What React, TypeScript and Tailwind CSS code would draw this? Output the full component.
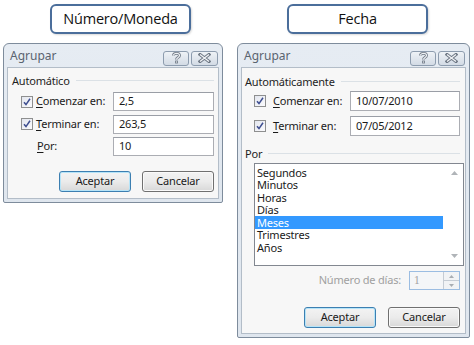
import React from "react";

const UI = "font-['Noto_Sans','Open_Sans',sans-serif]";
const T = "text-[11px] tracking-[-0.2px]";

function TitleBtn({ kind }: { kind: "help" | "close" }) {
  return (
    <div
      className={`${kind === "help" ? "w-[26px]" : "w-[27px]"} h-[15px] rounded-[3px] border border-[#8d9cae] bg-gradient-to-b from-[#eef2f6] to-[#d3dbe5] flex items-center justify-center`}
    >
      {kind === "help" ? (
        <svg width="9" height="12" viewBox="0 0 9 12">
          <path d="M1.5 3.4 C1.5 0.8 7.5 0.8 7.5 3.4 C7.5 5.4 4.5 5.4 4.5 7.6" stroke="#6d7784" strokeWidth="2.8" fill="none" />
          <path d="M1.5 3.4 C1.5 0.8 7.5 0.8 7.5 3.4 C7.5 5.4 4.5 5.4 4.5 7.6" stroke="#eef1f4" strokeWidth="1.2" fill="none" />
          <rect x="3.1" y="8.6" width="2.8" height="2.8" fill="#6d7784" />
          <rect x="3.9" y="9.4" width="1.2" height="1.2" fill="#eef1f4" />
        </svg>
      ) : (
        <svg width="13" height="10" viewBox="0 0 13 10">
          <path d="M2 1.5 L11 8.5 M11 1.5 L2 8.5" stroke="#6d7784" strokeWidth="3.2" strokeLinecap="square" />
          <path d="M2 1.5 L11 8.5 M11 1.5 L2 8.5" stroke="#f1f3f6" strokeWidth="1.3" />
        </svg>
      )}
    </div>
  );
}

function Dialog({ w, h, children }: { w: string; h: string; children: React.ReactNode }) {
  return (
    <div className={`${w} ${h} rounded-t-[6px] rounded-b-[2px] border border-[#7e8c9c] bg-gradient-to-b from-[#e6ecf3] to-[#dfe6ee] flex flex-col`}>
      <div className="h-[23px] flex items-center pl-[6px] pr-[4px] shrink-0">
        <span className="text-[12px] text-[#5a6470] leading-none">Agrupar</span>
        <div className="ml-auto flex gap-[2px] mt-[5px]">
          <TitleBtn kind="help" />
          <TitleBtn kind="close" />
        </div>
      </div>
      <div className="flex-1 mx-[3px] mb-[3px] border border-[#b3bdc8] bg-[#f7f7f7] flex flex-col">{children}</div>
    </div>
  );
}

function Section({ text }: { text: string }) {
  return (
    <div className="h-[14px] flex items-center gap-[6px]">
      <span className={`${T} text-[#1e1e1e] leading-none`}>{text}</span>
      <div className="flex-1 h-px bg-[#dbe1e6]" />
    </div>
  );
}

function Check() {
  return (
    <span className="w-[12px] h-[12px] shrink-0 border border-[#8e8f8f] bg-gradient-to-br from-[#e3e6ee] to-[#fbfbfd] flex items-center justify-center">
      <svg width="8" height="8" viewBox="0 0 8 8">
        <path d="M1 4.2 L3 6.6 L7 0.8" stroke="#3d4d8f" strokeWidth="1.5" fill="none" />
      </svg>
    </span>
  );
}

function TextBox({ value, w, h }: { value: string; w: string; h: string }) {
  return (
    <div className={`${w} ${h} ml-auto border border-[#abadb3] border-t-[#9a9ea6] bg-white flex items-center pl-[5px] ${T} text-[#1a1a1a]`}>
      {value}
    </div>
  );
}

function Btn({ label, primary, w }: { label: string; primary?: boolean; w: string }) {
  return (
    <div
      className={`${w} h-[21px] rounded-[3px] border ${
        primary ? "border-[#3c7fb1] shadow-[inset_0_0_0_1px_#b6e4f8]" : "border-[#707070] shadow-[inset_0_0_0_1px_#fafafa]"
      } bg-gradient-to-b from-[#f3f3f3] via-[#ebebeb] to-[#d8d8d8] flex items-center justify-center ${T} text-[#1a1a1a]`}
    >
      {label}
    </div>
  );
}

function LabelBox({ text }: { text: string }) {
  return (
    <div className="w-[141px] h-[30px] rounded-[6px] border-2 border-[#4b6e9b] bg-white flex items-center justify-center shadow-[1px_1px_2px_rgba(0,0,0,0.15)]">
      <span className="font-['Open_Sans',sans-serif] text-[14.5px] tracking-[-0.2px] text-[#111]">{text}</span>
    </div>
  );
}

const items = ["Segundos", "Minutos", "Horas", "Días", "Meses", "Trimestres", "Años"];

export default function App() {
  return (
    <div className={`w-[474px] h-[345px] bg-white flex pt-[4px] ${UI}`}>
      {/* Left column */}
      <div className="ml-[3px] w-[220px] flex flex-col">
        <div className="ml-[47px]">
          <LabelBox text="Número/Moneda" />
        </div>
        <div className="mt-[9px]">
          <Dialog w="w-[220px]" h="h-[160px]">
            <div className="pt-[5px] px-[4px] flex flex-col">
              <Section text="Automático" />
              <div className="mt-[5px] flex flex-col gap-[3.5px]">
                <div className="h-[19px] flex items-center">
                  <span className="ml-[9px]"><Check /></span>
                  <span className={`ml-[3px] ${T} text-[#1a1a1a]`}><u className="underline-offset-2">C</u>omenzar en:</span>
                  <TextBox value="2,5" w="w-[101px]" h="h-[19px]" />
                </div>
                <div className="h-[19px] flex items-center">
                  <span className="ml-[9px]"><Check /></span>
                  <span className={`ml-[3px] ${T} text-[#1a1a1a]`}><u className="underline-offset-2">T</u>erminar en:</span>
                  <TextBox value="263,5" w="w-[101px]" h="h-[19px]" />
                </div>
                <div className="h-[19px] flex items-center">
                  <span className={`ml-[25px] ${T} text-[#1a1a1a]`}><u className="underline-offset-2">P</u>or:</span>
                  <TextBox value="10" w="w-[101px]" h="h-[19px]" />
                </div>
              </div>
              <div className="mt-[15px] flex justify-end gap-[11px]">
                <Btn label="Aceptar" primary w="w-[72px]" />
                <Btn label="Cancelar" w="w-[72px]" />
              </div>
            </div>
          </Dialog>
        </div>
      </div>

      {/* Right column */}
      <div className="ml-[14px] w-[233px] flex flex-col">
        <div className="ml-[50px]">
          <LabelBox text="Fecha" />
        </div>
        <div className="mt-[9px]">
          <Dialog w="w-[233px]" h="h-[295px]">
            <div className="pt-[6px] pl-[3px] pr-[5px] flex flex-col">
              <Section text="Automáticamente" />
              <div className="mt-[3px] flex flex-col gap-[5px]">
                <div className="h-[20px] flex items-center">
                  <span className="ml-[9px]"><Check /></span>
                  <span className={`ml-[7px] ${T} text-[#1a1a1a]`}><u className="underline-offset-2">C</u>omenzar en:</span>
                  <TextBox value="10/07/2010" w="w-[110px]" h="h-[20px]" />
                </div>
                <div className="h-[20px] flex items-center">
                  <span className="ml-[9px]"><Check /></span>
                  <span className={`ml-[7px] ${T} text-[#1a1a1a]`}><u className="underline-offset-2">T</u>erminar en:</span>
                  <TextBox value="07/05/2012" w="w-[110px]" h="h-[20px]" />
                </div>
              </div>
              <div className="mt-[10px]">
                <Section text="Por" />
              </div>
              <div className="mt-[3px] ml-[9px] -mr-[4px] h-[103px] border border-[#828790] bg-white flex">
                <div className="flex-1 pt-[2px] flex flex-col">
                  {items.map((it) => (
                    <div
                      key={it}
                      className={`h-[12.5px] flex items-center pl-[2px] ${T} leading-none ${
                        it === "Meses" ? "bg-[#3399ff] text-white" : "text-[#1a1a1a]"
                      }`}
                    >
                      {it}
                    </div>
                  ))}
                </div>
                <div className="w-[20px] flex flex-col items-center justify-between py-[7px] pl-[2px]">
                  <svg width="7" height="4" viewBox="0 0 7 4"><path d="M0 4 L3.5 0 L7 4 Z" fill="#b0b4b8" /></svg>
                  <svg width="7" height="4" viewBox="0 0 7 4"><path d="M0 0 L3.5 4 L7 0 Z" fill="#b0b4b8" /></svg>
                </div>
              </div>
              <div className="mt-[5px] h-[19px] flex items-center justify-end">
                <span className={`${T} text-[#a0a0a0]`}>Número de días:</span>
                <div className="ml-[8px] w-[51px] h-[19px] border border-[#9bbde2] bg-[#f4f6f8] flex">
                  <span className="flex-1 pl-[4px] flex items-center text-[11.5px] text-[#a0a0a0] font-['Liberation_Serif',serif]">1</span>
                  <div className="w-[16px] flex flex-col border-l border-[#c5ccd4]">
                    <div className="flex-1 border-b border-[#c5ccd4] bg-[#f1f3f5] flex items-center justify-center">
                      <svg width="5" height="3" viewBox="0 0 5 3"><path d="M0 3 L2.5 0 L5 3 Z" fill="#a8adb3" /></svg>
                    </div>
                    <div className="flex-1 bg-[#f1f3f5] flex items-center justify-center">
                      <svg width="5" height="3" viewBox="0 0 5 3"><path d="M0 0 L2.5 3 L5 0 Z" fill="#a8adb3" /></svg>
                    </div>
                  </div>
                </div>
              </div>
              <div className="mt-[17px] flex justify-end gap-[12px]">
                <Btn label="Aceptar" primary w="w-[72px]" />
                <Btn label="Cancelar" w="w-[72px]" />
              </div>
            </div>
          </Dialog>
        </div>
      </div>
    </div>
  );
}
